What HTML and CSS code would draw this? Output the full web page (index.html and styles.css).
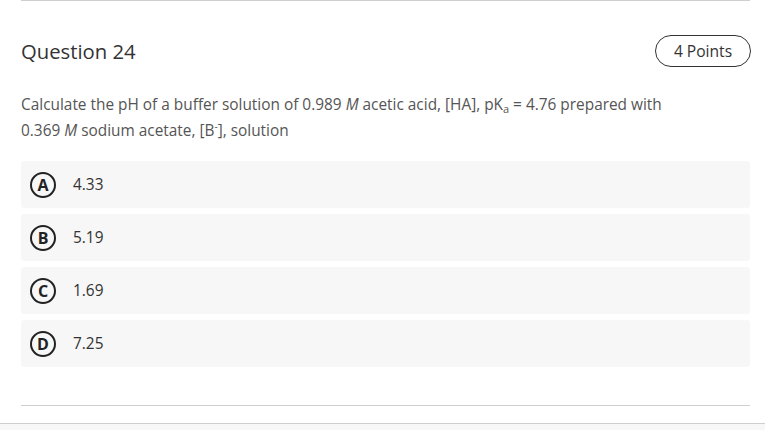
FILE: index.html
```html
<!DOCTYPE html>
<html>
<head>
<meta charset="utf-8">
<link rel="stylesheet" href="styles.css">
</head>
<body>
<div class="page">
  <div class="question">
    <div class="header">
      <h2 class="title">Question 24</h2>
      <span class="points">4 Points</span>
    </div>
    <p class="prompt">Calculate the pH of a buffer solution of 0.989 <i>M</i> acetic acid, [HA], pK<sub>a</sub> = 4.76 prepared with<br>0.369 <i>M</i> sodium acetate, [B<sup>-</sup>], solution</p>
    <div class="options">
      <div class="option"><span class="letter">A</span><span class="value">4.33</span></div>
      <div class="option"><span class="letter">B</span><span class="value">5.19</span></div>
      <div class="option"><span class="letter">C</span><span class="value">1.69</span></div>
      <div class="option"><span class="letter">D</span><span class="value">7.25</span></div>
    </div>
  </div>
  <div class="footer"></div>
</div>
</body>
</html>
```
FILE: styles.css
```css
html, body {
  margin: 0;
  padding: 0;
  background: #fff;
}
body {
  font-family: "Open Sans", "Liberation Sans", sans-serif;
  color: #333;
}
.page {
  height: 430px;
  display: flex;
  flex-direction: column;
}
.question {
  margin: 0 15px 0 21px;
  border-top: 1px solid #cfcfcf;
  border-bottom: 1px solid #cfcfcf;
  height: 406px;
  box-sizing: border-box;
}
.header {
  display: flex;
  justify-content: space-between;
  align-items: center;
  margin-top: 34px;
  height: 32px;
}
.title {
  margin: 0;
  font-size: 20.3px;
  font-weight: 400;
  color: #333;
  line-height: 32px;
}
.points {
  box-sizing: border-box;
  width: 96px;
  height: 32px;
  border: 1px solid #333;
  border-radius: 16px;
  font-size: 15.6px;
  line-height: 30px;
  text-align: center;
  color: #333;
  margin-right: -1px;
}
.prompt {
  margin: 25px 0 0 0;
  font-size: 15.4px;
  line-height: 26px;
  color: #555;
  white-space: nowrap;
}
.prompt sub {
  font-size: 11px;
  line-height: 0;
  vertical-align: -3px;
}
.prompt sup {
  font-size: 10px;
  line-height: 0;
  vertical-align: 6px;
}
.options {
  margin-top: 17px;
  display: flex;
  flex-direction: column;
  gap: 6px;
}
.option {
  height: 47px;
  background: #f7f7f7;
  border-radius: 3px;
  display: flex;
  align-items: center;
  padding-left: 9px;
}
.letter {
  flex: 0 0 auto;
  box-sizing: border-box;
  width: 26px;
  height: 26px;
  border: 2px solid #222;
  border-radius: 50%;
  display: flex;
  align-items: center;
  justify-content: center;
  font-size: 16px;
  font-weight: 700;
  color: #222;
  line-height: 1;
}
.value {
  margin-left: 17px;
  font-size: 15.4px;
  color: #333;
}
.footer {
  margin-top: 17px;
  flex: 1;
  border-top: 1px solid #cfcfcf;
  background: #f7f7f7;
}
```
